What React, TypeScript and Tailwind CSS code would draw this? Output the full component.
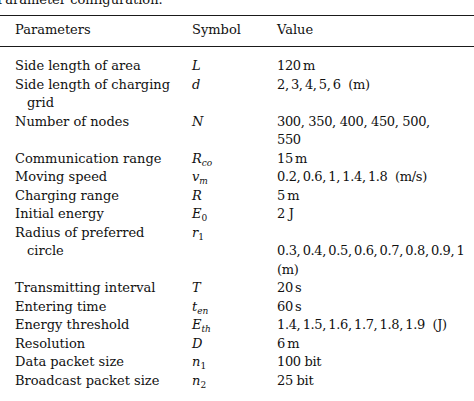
import React from "react";

const T = "\u2009";

type Row = {
  label: string[];
  sym: React.ReactNode;
  val: string[];
};

const Sub = ({ children, roman }: { children: React.ReactNode; roman?: boolean }) => (
  <span className={`relative top-[3px] align-baseline text-[9px] leading-none ${roman ? "not-italic" : "italic"}`}>
    {children}
  </span>
);

const rows: Row[] = [
  { label: ["Side length of area"], sym: "L", val: [`120${T}m`] },
  { label: ["Side length of charging", "grid"], sym: "d", val: [`2,${T}3,${T}4,${T}5,${T}6  (m)`] },
  { label: ["Number of nodes"], sym: "N", val: ["300, 350, 400, 450, 500,", "550"] },
  { label: ["Communication range"], sym: <>R<Sub>co</Sub></>, val: [`15${T}m`] },
  { label: ["Moving speed"], sym: <>v<Sub>m</Sub></>, val: [`0.2,${T}0.6,${T}1,${T}1.4,${T}1.8  (m/s)`] },
  { label: ["Charging range"], sym: "R", val: [`5${T}m`] },
  { label: ["Initial energy"], sym: <>E<Sub roman>0</Sub></>, val: ["2 J"] },
  {
    label: ["Radius of preferred", "circle"],
    sym: <>r<Sub roman>1</Sub></>,
    val: ["", `0.3,${T}0.4,${T}0.5,${T}0.6,${T}0.7,${T}0.8,${T}0.9,${T}1`, "(m)"],
  },
  { label: ["Transmitting interval"], sym: "T", val: [`20${T}s`] },
  { label: ["Entering time"], sym: <>t<Sub>en</Sub></>, val: [`60${T}s`] },
  { label: ["Energy threshold"], sym: <>E<Sub>th</Sub></>, val: [`1.4,${T}1.5,${T}1.6,${T}1.7,${T}1.8,${T}1.9  (J)`] },
  { label: ["Resolution"], sym: "D", val: [`6${T}m`] },
  { label: ["Data packet size"], sym: <>n<Sub roman>1</Sub></>, val: ["100 bit"] },
  { label: ["Broadcast packet size"], sym: <>n<Sub roman>2</Sub></>, val: ["25 bit"] },
];

export default function App() {
  return (
    <div
      className="h-[401px] w-[474px] overflow-hidden bg-white text-[13px] leading-[18.5px] text-[#111]"
      style={{ fontFamily: '"DejaVu Serif", serif' }}
    >
      <div className="-mt-[9px] -ml-[3px] whitespace-nowrap">Parameter configuration.</div>

      <div className="mt-[5px] border-t-[1.5px] border-[#1a1a1a]" />
      <div className="grid grid-cols-[177px_85px_1fr] pl-[15px] pt-[5px] pb-[7px]">
        <div>Parameters</div>
        <div>Symbol</div>
        <div>Value</div>
      </div>
      <div className="border-t-[1.5px] border-[#1a1a1a]" />

      <div className="flex flex-col pl-[15px] pt-[10px]">
        {rows.map((r, i) => (
          <div key={i} className="grid grid-cols-[177px_85px_1fr] whitespace-pre">
            <div>
              {r.label.map((l, j) => (
                <div key={j} className={`h-[18.5px] ${j > 0 ? "pl-[12px]" : ""}`}>
                  {l}
                </div>
              ))}
            </div>
            <div className="h-[18.5px] italic">{r.sym}</div>
            <div className="tracking-[-0.35px]">
              {r.val.map((v, j) => (
                <div key={j} className="h-[18.5px]">
                  {v}
                </div>
              ))}
            </div>
          </div>
        ))}
      </div>
    </div>
  );
}
